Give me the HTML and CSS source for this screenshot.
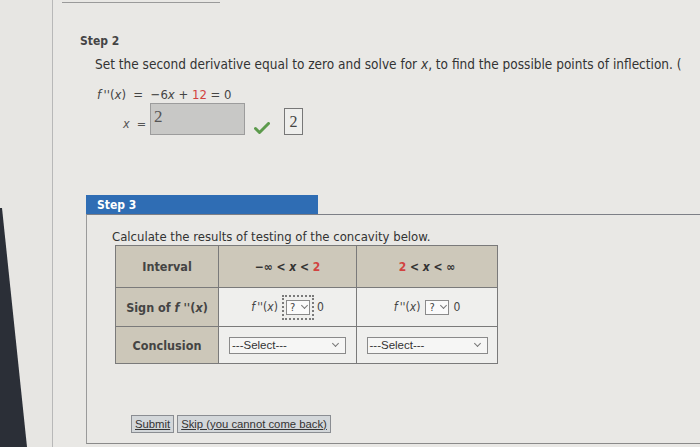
FILE: index.html
```html
<!DOCTYPE html>
<html>
<head>
<meta charset="utf-8">
<link rel="stylesheet" href="styles.css">
</head>
<body>
<svg class="bezel" width="40" height="447" viewBox="0 0 40 447"><polygon points="0,208 2,208 27,447 0,447" fill="#2b2f37"/></svg>
<div class="topline"></div>
<div class="page">
  <section class="step2">
    <h3 class="step-title">Step 2</h3>
    <p class="instr">Set the second derivative equal to zero and solve for <i>x</i>, to find the possible points of inflection. (</p>
    <div class="math"><i>f</i>&thinsp;''(<i>x</i>) &nbsp;= &nbsp;−6<i>x</i> + <span class="red">12</span> = 0</div>
    <div class="answer-row">
      <span class="xeq"><i>x</i> &nbsp;=</span>
      <span class="input">2</span>
      <svg class="check" width="16" height="12" viewBox="0 0 16 12"><path d="M1.5 6.5 L5.5 10.5 L14.5 1.5" fill="none" stroke="#5c9a4c" stroke-width="3" stroke-linecap="round" stroke-linejoin="round"/></svg>
      <span class="boxed">2</span>
    </div>
  </section>
  <section class="step3">
    <div class="tab">Step 3</div>
    <div class="panel">
      <p class="calc">Calculate the results of testing of the concavity below.</p>
      <table class="conc">
        <tr class="r1">
          <th class="lab">Interval</th>
          <th class="hd">−∞ &lt; <i>x</i> &lt; <span class="red">2</span></th>
          <th class="hd">
            <span class="red">2</span> &lt; <i>x</i> &lt; ∞</th>
        </tr>
        <tr class="r2">
          <th class="lab">Sign of <i>f</i> ''(<i>x</i>)</th>
          <td><span class="sign"><i>f</i>&thinsp;''(<i>x</i>)<span class="focus"><span class="mini">?<span class="chev"></span></span></span>0</span></td>
          <td><span class="sign"><i>f</i>&thinsp;''(<i>x</i>)<span class="mini m2">?<span class="chev"></span></span>0</span></td>
        </tr>
        <tr class="r3">
          <th class="lab">Conclusion</th>
          <td><span class="sel">---Select---<span class="chev"></span></span></td>
          <td><span class="sel s2">---Select---<span class="chev"></span></span></td>
        </tr>
      </table>
      <div class="buttons">
        <span class="btn">Submit</span>
        <span class="btn">Skip (you cannot come back)</span>
      </div>
    </div>
  </section>
</div>
</body>
</html>
```
FILE: styles.css
```css
html, body {
  margin: 0;
  padding: 0;
  height: 447px;
  overflow: hidden;
}
body {
  background: #e7e6e3;
  font-family: "DejaVu Sans Condensed", "DejaVu Sans", Verdana, sans-serif;
  font-stretch: condensed;
  color: #333;
  position: relative;
}
.bezel {
  position: absolute;
  left: 0;
  top: 0;
}
.topline {
  position: absolute;
  left: 62px;
  top: 2px;
  width: 158px;
  height: 1px;
  background: #9a9a9a;
}
.page {
  margin-left: 52px;
  border-left: 1px solid #b8b8b8;
  height: 447px;
  padding-top: 34px;
  box-sizing: border-box;
  background: #e9e8e5;
}
.step-title {
  margin: 0 0 0 27px;
  font-size: 12px;
  line-height: 14px;
  font-weight: bold;
  color: #444;
}
.instr {
  margin: 8px 0 0 42px;
  font-size: 13.5px;
  line-height: 16px;
  white-space: nowrap;
  color: #333;
}
.math {
  margin: 15px 0 0 44px;
  font-size: 13px;
  line-height: 15px;
  color: #444;
}
.red { color: #d2423f; }
.hd .red { font-weight: bold; }
.answer-row {
  margin: 1px 0 0 70px;
  display: flex;
  align-items: flex-end;
  height: 32px;
}
.xeq {
  font-size: 12.5px;
  color: #555;
  align-self: center;
  margin-top: 8px;
  width: 27px;
}
.input {
  background: #c8c8c6;
  border: 1px solid #9c9c9c;
  font-family: "Liberation Serif", serif;
  font-size: 17px;
  color: #555;
  line-height: 26px;
  padding-left: 3px;
  box-sizing: border-box;
  width: 95px;
  height: 32px;
}
.check {
  margin: 0 0 0 9px;
  position: relative;
  top: -1px;
}
.boxed {
  margin-left: 14px;
  width: 19px;
  height: 27px;
  border: 1px solid #777;
  box-sizing: border-box;
  font-family: "Liberation Serif", serif;
  font-size: 16px;
  line-height: 25px;
  text-align: center;
  color: #444;
  background: #eeeeec;
  align-self: center;
  margin-top: 5px;
}
.step3 {
  margin: 60px 0 0 33px;
}
.tab {
  height: 19px;
  background: #2f6db4;
  color: #fff;
  font-weight: bold;
  font-size: 12px;
  line-height: 20px;
  padding-left: 11px;
  box-sizing: border-box;
  width: 232px;
}
.panel {
  border-top: 1px solid #7d7f86;
  border-left: 1px solid #9a9a9a;
  border-bottom: 1px solid #8a8a8a;
  padding: 14px 0 10px 0;
}
.calc {
  margin: 0 0 0 25px;
  font-size: 13px;
  line-height: 15px;
  color: #333;
}
.conc {
  margin: 1px 0 0 28px;
  border-collapse: collapse;
  border: 1px solid #7a7a7a;
}
.conc th, .conc td {
  border: 1px solid #7a7a7a;
  padding: 0;
  text-align: center;
  font-size: 12px;
  color: #333;
}
.conc th.lab {
  width: 102px;
  background: #ccc7b9;
  color: #444;
  font-weight: bold;
  font-size: 12.5px;
}
.conc th.hd {
  width: 137px;
  background: #cdc8ba;
  font-weight: bold;
  color: #333;
}
.conc th.hd + th.hd { width: 140px; }
.conc td { background: #efefed; }
.r1 { height: 42px; }
.r2 { height: 39px; }
.r3 { height: 37px; }
.sign {
  display: inline-flex;
  align-items: center;
  font-size: 12px;
  color: #444;
}
.focus {
  border: 2px dotted #7a7a7a;
  padding: 3px 2px;
  margin: 0 3px 0 4px;
  display: inline-flex;
}
.mini {
  display: inline-flex;
  align-items: center;
  justify-content: space-between;
  width: 24px;
  height: 15px;
  border: 1px solid #8a8a8a;
  background: #fafafa;
  box-sizing: border-box;
  font-size: 11px;
  padding: 0 2px 0 3px;
  font-style: normal;
  color: #444;
}
.mini.m2 { margin: 0 4px 0 5px; }
.chev {
  display: inline-block;
  width: 4px;
  height: 4px;
  border-right: 1px solid #777;
  border-bottom: 1px solid #777;
  transform: rotate(45deg);
  margin-top: -3px;
}
.sel {
  display: flex;
  align-items: center;
  justify-content: space-between;
  margin: 0 auto;
  width: 117px;
  height: 17px;
  border: 1px solid #8a8a8a;
  background: #f6f6f5;
  box-sizing: border-box;
  font-family: "Liberation Sans", Arial, sans-serif;
  font-size: 11.5px;
  color: #333;
  padding: 0 7px 0 2px;
  text-align: left;
}
.sel.s2 { width: 121px; }
.buttons {
  margin: 51px 0 0 44px;
  display: flex;
  gap: 3px;
}
.btn {
  height: 18px;
  line-height: 16px;
  box-sizing: border-box;
  border: 1px solid #8a8d92;
  background: #d3d7da;
  font-family: "Liberation Sans", Arial, sans-serif;
  font-size: 11.3px;
  text-decoration: underline;
  color: #333;
  padding: 0 3px;
}
```
